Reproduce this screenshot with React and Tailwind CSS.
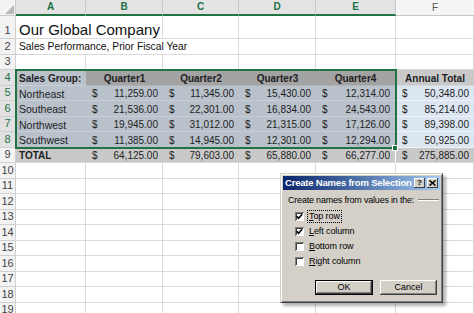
import React from "react";

const GRID = "grid grid-cols-[16px_70px_77px_76px_77px_80px_78px]";
const CELL = "border-r border-b border-[#dadada]";

function Row({ n, h, sel, children }) {
  return (
    <div className={GRID + " " + h}>
      <div
        className={
          (sel ? "bg-[#e1e1e1] text-[#217346]" : "bg-[#f3f3f3] text-[#444]") +
          " border-r border-b border-[#d0d0d0] flex items-end justify-center text-[11px] leading-none pb-[2px]"
        }
      >
        {n}
      </div>
      {children}
    </div>
  );
}

function Empty() {
  return <div className={CELL} />;
}

function Money({ v, cls }) {
  return (
    <div className={"flex items-end justify-between pl-[6px] pr-[5px] pb-[1px] text-[10px] leading-none text-[#1e1e1e] " + cls}>
      <span>$</span>
      <span>{v}</span>
    </div>
  );
}

function DataRow({ n, label, vals }) {
  return (
    <Row n={n} h="h-[15.5px]" sel>
      <div className="flex items-end pl-[3px] pb-[1px] text-[10.5px] leading-none text-[#1e1e1e] bg-[#b9c1cb] border-b border-[#c7ced7]">
        {label}
      </div>
      <Money v={vals[0]} cls="bg-[#b9c1cb] border-b border-[#c7ced7]" />
      <Money v={vals[1]} cls="bg-[#b9c1cb] border-b border-[#c7ced7]" />
      <Money v={vals[2]} cls="bg-[#b9c1cb] border-b border-[#c7ced7]" />
      <Money v={vals[3]} cls="bg-[#b9c1cb] border-b border-[#c7ced7] border-r border-r-white" />
      <Money v={vals[4]} cls="bg-[#dce6f1] border-b border-[#eef3f9]" />
    </Row>
  );
}

function Check({ checked }) {
  return (
    <div className="w-[9px] h-[9px] bg-white shadow-[inset_1px_1px_0_#808080,inset_-1px_-1px_0_#ffffff,inset_2px_2px_0_#404040] flex items-center justify-center">
      {checked && (
        <svg width="7" height="7" viewBox="0 0 7 7">
          <polyline points="0.8,3.2 2.6,5.2 6.2,1.3" fill="none" stroke="#000" strokeWidth="1.6" />
        </svg>
      )}
    </div>
  );
}

function Option({ checked, u, rest, focus }) {
  return (
    <div className="h-[15px] flex items-center gap-[3px]">
      <Check checked={checked} />
      <span className={"text-[9px] leading-none text-black tracking-[-0.1px] " + (focus ? "border border-dotted border-black px-[1px] py-[1px]" : "px-[2px]")}>
        <span className="underline">{u}</span>
        {rest}
      </span>
    </div>
  );
}

export default function App() {
  const rows = [
    ["Northeast", ["11,259.00", "11,345.00", "15,430.00", "12,314.00", "50,348.00"]],
    ["Southeast", ["21,536.00", "22,301.00", "16,834.00", "24,543.00", "85,214.00"]],
    ["Northwest", ["19,945.00", "31,012.00", "21,315.00", "17,126.00", "89,398.00"]],
    ["Southwest", ["11,385.00", "14,945.00", "12,301.00", "12,294.00", "50,925.00"]],
  ];
  const total = ["64,125.00", "79,603.00", "65,880.00", "66,277.00", "275,885.00"];
  const emptyRows = [10, 11, 12, 13, 14, 15, 16, 17, 18, 19];

  return (
    <div className="relative w-[474px] h-[313px] overflow-hidden bg-white font-['Liberation_Sans',Arial,sans-serif]">
      {/* column headers */}
      <div className={GRID + " h-[16px]"}>
        <div className="relative bg-[#f3f3f3] border-r border-b border-[#c8c8c8]">
          <svg className="absolute left-0 top-0" width="16" height="16" viewBox="0 0 16 16">
            <polygon points="14,5 14,14 5,14" fill="#b8b8b8" />
          </svg>
        </div>
        {["A", "B", "C", "D", "E"].map((c) => (
          <div
            key={c}
            className="bg-[#e3e3e3] text-[#217346] font-bold text-[10px] leading-none flex items-center justify-center border-r border-r-[#c8c8c8] border-b-2 border-b-[#217346]"
          >
            {c}
          </div>
        ))}
        <div className="bg-[#f5f5f5] text-[#555] text-[10px] leading-none flex items-center justify-center border-b border-[#c8c8c8]">
          F
        </div>
      </div>

      {/* row 1 */}
      <Row n="1" h="h-[23px]">
        <div className={"col-span-2 flex items-end pl-[3px] pb-[1px] text-[15px] leading-none text-[#111] whitespace-nowrap " + CELL}>
          Our Global Company
        </div>
        <Empty />
        <Empty />
        <Empty />
        <Empty />
      </Row>

      {/* row 2 */}
      <Row n="2" h="h-[16px]">
        <div className={"col-span-3 flex items-end pl-[3px] pb-[2px] text-[10.3px] leading-none text-[#111] whitespace-nowrap " + CELL}>
          Sales Performance, Prior Fiscal Year
        </div>
        <Empty />
        <Empty />
        <Empty />
      </Row>

      {/* row 3 */}
      <Row n="3" h="h-[15px]">
        <Empty />
        <Empty />
        <Empty />
        <Empty />
        <Empty />
        <Empty />
      </Row>

      {/* row 4 */}
      <Row n="4" h="h-[15.5px]" sel>
        <div className="flex items-end pl-[3px] pb-[1px] text-[10px] font-bold leading-none text-[#1e1e1e] bg-[#b9c1cb] border-b border-[#c7ced7]">
          Sales Group:
        </div>
        {["Quarter1", "Quarter2", "Quarter3"].map((q) => (
          <div key={q} className="flex items-end justify-center pb-[1px] text-[10px] font-bold leading-none text-[#1e1e1e] bg-[#a3a3a3] border-b border-[#b3b3b3]">
            {q}
          </div>
        ))}
        <div className="flex items-end justify-center pb-[1px] text-[10px] font-bold leading-none text-[#1e1e1e] bg-[#a3a3a3] border-b border-[#b3b3b3] border-r border-r-white">
          Quarter4
        </div>
        <div className="flex items-end justify-center pb-[1px] text-[10px] font-bold leading-none text-[#1e1e1e] bg-[#c9c9c9] border-b border-[#d8d8d8]">
          Annual Total
        </div>
      </Row>

      {rows.map(([label, vals], i) => (
        <DataRow key={label} n={String(5 + i)} label={label} vals={vals} />
      ))}

      {/* row 9 */}
      <Row n="9" h="h-[15.5px]">
        <div className="flex items-end pl-[3px] pb-[1px] text-[10px] font-bold leading-none text-[#1e1e1e] bg-[#c9c9c9] border-b border-[#dadada]">
          TOTAL
        </div>
        {total.map((v, i) => (
          <Money key={i} v={v} cls={"bg-[#c9c9c9] border-b border-[#dadada]" + (i === 3 ? " border-r border-r-white" : "")} />
        ))}
      </Row>

      {emptyRows.map((n) => (
        <Row key={n} n={String(n)} h="h-[15.5px]">
          <Empty />
          <Empty />
          <Empty />
          <Empty />
          <Empty />
          <Empty />
        </Row>
      ))}

      {/* selection border */}
      <div className="absolute left-[15px] top-[69px] w-[382px] h-[80px] border-2 border-[#217346] pointer-events-none" />
      <div className="absolute left-[392px] top-[145px] w-[6px] h-[6px] bg-[#217346] border border-white" />

      {/* dialog */}
      <div className="absolute left-[280px] top-[173px] w-[163px] h-[130px] bg-[#d4d0c8] border border-t-[#d4d0c8] border-l-[#d4d0c8] border-r-[#404040] border-b-[#404040] shadow-[inset_1px_1px_0_#ffffff,inset_-1px_-1px_0_#808080,3px_3px_3px_rgba(0,0,0,0.3)] p-[2px]">
        <div className="h-[14px] flex items-center bg-linear-to-r from-[#0a246a] to-[#a6caf0] pl-[2px] pr-[2px]">
          <span className="text-white font-bold text-[9.5px] leading-none tracking-[-0.2px] whitespace-nowrap">
            Create Names from Selection
          </span>
          <div className="ml-auto flex gap-[2px]">
            <div className="w-[11px] h-[10px] bg-[#d4d0c8] shadow-[inset_-1px_-1px_0_#404040,inset_1px_1px_0_#ffffff] flex items-center justify-center text-[8px] font-bold leading-none text-black">
              ?
            </div>
            <div className="w-[11px] h-[10px] bg-[#d4d0c8] shadow-[inset_-1px_-1px_0_#404040,inset_1px_1px_0_#ffffff] flex items-center justify-center">
              <svg width="7" height="6" viewBox="0 0 7 6">
                <path d="M0.5 0.5 L6.5 5.5 M6.5 0.5 L0.5 5.5" stroke="#000" strokeWidth="1.5" />
              </svg>
            </div>
          </div>
        </div>
        <div className="pl-[5px] pr-[1px] pt-[4px]">
          <div className="h-[12px] flex items-center text-[9px] leading-none text-black tracking-[-0.2px] whitespace-nowrap">
            Create names from values in the:
            <div className="flex-1 ml-[4px] h-[2px] border-t border-t-[#808080] border-b border-b-white" />
          </div>
          <div className="pl-[7px] mt-[3px] flex flex-col">
            <Option checked u="T" rest="op row" focus />
            <Option checked u="L" rest="eft column" />
            <Option u="B" rest="ottom row" />
            <Option u="R" rest="ight column" />
          </div>
          <div className="mt-[11px] flex justify-end gap-[7px] pr-[2px]">
            <div className="w-[58px] h-[15px] border border-black bg-[#d4d0c8] shadow-[inset_-1px_-1px_0_#404040,inset_1px_1px_0_#ffffff,inset_-2px_-2px_0_#808080] flex items-center justify-center text-[9px] leading-none text-black">
              OK
            </div>
            <div className="w-[57px] h-[15px] bg-[#d4d0c8] shadow-[inset_-1px_-1px_0_#404040,inset_1px_1px_0_#ffffff,inset_-2px_-2px_0_#808080] flex items-center justify-center text-[9px] leading-none text-black">
              Cancel
            </div>
          </div>
        </div>
      </div>
    </div>
  );
}
